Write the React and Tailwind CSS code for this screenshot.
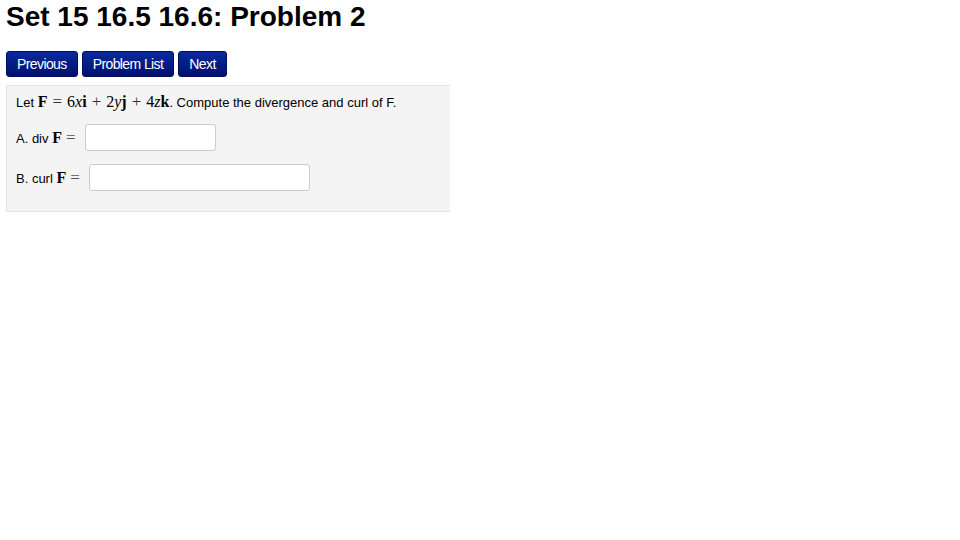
import React from 'react';

const serif = { fontFamily: '"Liberation Serif", "DejaVu Serif", serif' };

function NavButton({ children }) {
    return (
        <button className="h-[26px] px-[10px] rounded-[3px] bg-gradient-to-b from-[#0a2a9a] to-[#001070] border border-[#00105e] text-white text-[14px] tracking-[-0.6px] leading-none">
            {children}
        </button>
    );
}

function Op({ children }) {
    return <span className="mx-[5px] text-[17px] text-[#333]">{children}</span>;
}

export default function App() {
    return (
        <div className="w-[960px] h-[540px] bg-white overflow-hidden text-black" style={{ fontFamily: '"Liberation Sans", Arial, sans-serif' }}>
            <div className="pl-[6px] pt-[1px]">
                <h1 className="text-[28px] font-bold leading-[32px]">Set 15 16.5 16.6: Problem 2</h1>
                <div className="flex gap-[4px] mt-[18px]">
                    <NavButton>Previous</NavButton>
                    <NavButton>Problem List</NavButton>
                    <NavButton>Next</NavButton>
                </div>
                <div className="mt-[8px] w-[444px] h-[127px] bg-[#f4f4f4] border border-r-0 border-[#e3e3e3] pl-[9px] pt-[7px] text-[13px]">
                    <p className="leading-[18px] h-[18px]">
                        Let <span style={serif} className="text-[16px]"><b>F</b><Op>=</Op>6<i>x</i><b>i</b><Op>+</Op>2<i>y</i><b>j</b><Op>+</Op>4<i>z</i><b>k</b></span>. Compute the divergence and curl of F.
                    </p>
                    <div className="flex items-center gap-[9px] mt-[13px]">
                        <span>A. div <b style={serif} className="text-[16px]">F</b><span style={serif} className="text-[17px] text-[#555] ml-[4px]">=</span></span>
                        <input className="w-[131px] h-[27px] bg-white border border-[#cccccc] rounded-[3px]" />
                    </div>
                    <div className="flex items-center gap-[9px] mt-[13px]">
                        <span>B. curl <b style={serif} className="text-[16px]">F</b><span style={serif} className="text-[17px] text-[#555] ml-[4px]">=</span></span>
                        <input className="w-[221px] h-[27px] bg-white border border-[#cccccc] rounded-[3px]" />
                    </div>
                </div>
            </div>
        </div>
    );
}
